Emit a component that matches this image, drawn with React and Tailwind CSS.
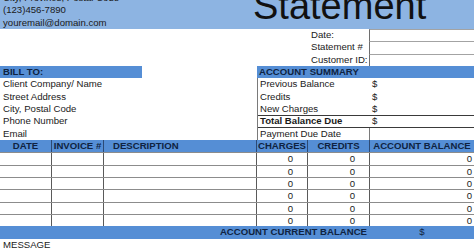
import React from "react";

const R = "h-[12.33px] leading-[12.33px]";
const band = "bg-[#558ED5] text-[#0f2341] font-bold";

export default function App() {
  const dateRows = ["Date:", "Statement #", "Customer ID:"];
  const billRows = ["Client Company/ Name", "Street Address", "City, Postal Code", "Phone Number", "Email"];
  const cols = "grid grid-cols-[52px_52px_153px_51px_62px_104px]";
  return (
    <div
      className="w-[474px] h-[248px] overflow-hidden bg-white text-[9.6px] text-[#1a1a1a]"
      style={{ fontFamily: '"Liberation Sans", Arial, sans-serif' }}
    >
      {/* header band */}
      <div className="-mt-[8px] h-[37px] bg-[#8DB4E2] flex">
        <div className="w-[253px] pl-[3px]">
          <div className={R}>City, Province, Postal Code</div>
          <div className={R}>(123)456-7890</div>
          <div className={R}>youremail@domain.com</div>
        </div>
        <div className="text-[38px] leading-[38px] -mt-[5px] text-[#111]">Statement</div>
      </div>

      {/* date rows */}
      {dateRows.map((l) => (
        <div key={l} className={`flex ${R}`}>
          <div className="w-[308px]" />
          <div className="w-[61px] pl-[3px]">{l}</div>
          <div className="flex-1 border-l border-t border-l-[#6e6e6e] border-t-[#a3a3a3]" />
        </div>
      ))}

      {/* bill to / account summary */}
      <div className="flex">
        <div className="w-[257px]">
          <div className={`w-[142px] pl-[3px] ${band} ${R}`}>BILL TO:</div>
          {billRows.map((l) => (
            <div key={l} className={`pl-[3px] ${R}`}>{l}</div>
          ))}
        </div>
        <div className="flex-1">
          <div className={`pl-[2px] ${band} ${R}`}>ACCOUNT SUMMARY</div>
          <div className="border-l border-[#7a7a7a]">
            {["Previous Balance", "Credits", "New Charges"].map((l) => (
              <div key={l} className={`flex ${R}`}>
                <div className="w-[111px] pl-[2px]">{l}</div>
                <div className="pl-[3px]">$</div>
              </div>
            ))}
            <div className={`flex border-t border-b border-[#3a3a3a] h-[12.33px] leading-[10.33px]`}>
              <div className="w-[111px] pl-[2px] font-bold">Total Balance Due</div>
              <div className="pl-[3px]">$</div>
            </div>
            <div className={`flex ${R}`}>
              <div className="w-[111px] pl-[2px]">Payment Due Date</div>
              <div className="flex-1 border-l border-[#7a7a7a]" />
            </div>
          </div>
        </div>
      </div>

      {/* table header */}
      <div className={`${cols} ${band} ${R}`}>
        <div className="text-center border-r border-[#2c4a75]">DATE</div>
        <div className="text-center border-r border-[#2c4a75]">INVOICE #</div>
        <div className="pl-[9px] border-r border-[#2c4a75]">DESCRIPTION</div>
        <div className="text-center border-r border-[#2c4a75]">CHARGES</div>
        <div className="text-center border-r border-[#2c4a75]">CREDITS</div>
        <div className="text-center">ACCOUNT BALANCE</div>
      </div>

      {/* body rows */}
      {[0, 1, 2, 3, 4, 5].map((i) => (
        <div key={i} className={`${cols} border-t border-[#8c8c8c] h-[12.33px] leading-[11.33px]`}>
          <div className="border-r border-[#5a5a5a]" />
          <div className="border-r border-[#5a5a5a]" />
          <div className="border-r border-[#5a5a5a]" />
          <div className="border-r border-[#5a5a5a] text-right pr-[14px]">0</div>
          <div className="border-r border-[#5a5a5a] text-right pr-[14px]">0</div>
          <div className="text-right pr-[2px]">0</div>
        </div>
      ))}

      {/* footer */}
      <div className={`flex bg-[#558ED5] text-[#0f2341] ${R}`}>
        <div className="w-[370px] text-right pr-[3px] font-bold">ACCOUNT CURRENT BALANCE</div>
        <div className="flex-1 text-center">$</div>
      </div>

      <div className={`pl-[3px] ${R} text-[#222]`}>MESSAGE</div>
    </div>
  );
}
